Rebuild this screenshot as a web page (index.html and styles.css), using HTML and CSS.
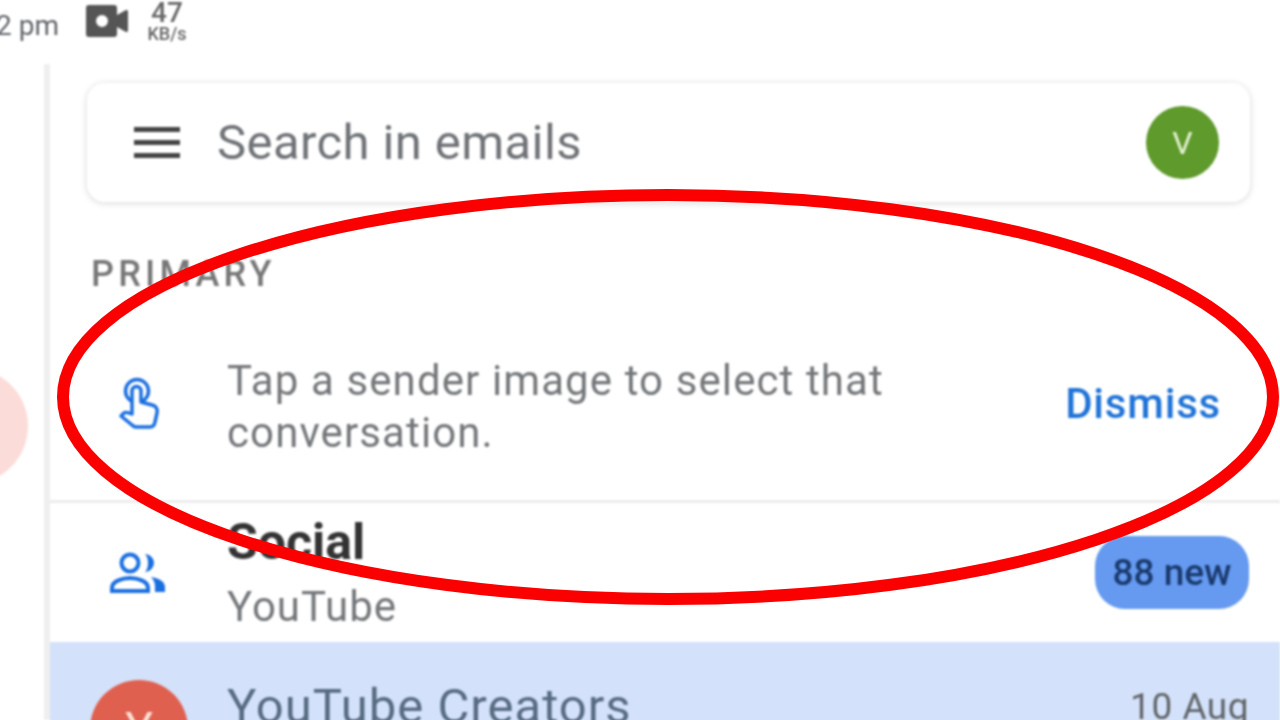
FILE: index.html
```html
<!DOCTYPE html>
<html lang="en">
  <head>
    <meta charset="UTF-8" />
    <meta name="viewport" content="width=device-width, initial-scale=1.0" />
    <title>Gmail tip</title>
    <link rel="stylesheet" href="styles.css">
  </head>
  <body>
    <div class="screen">
      <div class="page">
        <div class="status-bar">
          <span class="clock">2 pm</span>
          <svg class="cam-icon" width="44" height="34" viewBox="0 0 44 34">
            <path fill="#555" fill-rule="evenodd" d="M4 1h25a3 3 0 0 1 3 3v7l9-5a1.500 1.500 0 0 1 2 1.500v19a1.500 1.500 0 0 1-2 1.500l-9-5v7a3 3 0 0 1-3 3H4a3 3 0 0 1-3-3V4a3 3 0 0 1 3-3zM17 11a6 6 0 1 0 0 12 6 6 0 0 0 0-12z"/>
          </svg>
          <div class="speed">
            <span class="speed-num">47</span>
            <span class="speed-unit">KB/s</span>
          </div>
        </div>

        <div class="main">
          <div class="gutter">
            <div class="peek-circle"></div>
          </div>
          <div class="app">
            <div class="search-wrap">
              <div class="search-card">
                <div class="menu-icon"><i></i><i></i><i></i></div>
                <span class="search-text">Search in emails</span>
                <div class="avatar">V</div>
              </div>
            </div>

            <h4 class="section-title">PRIMARY</h4>

            <div class="tip-row">
              <svg class="tap-icon" width="44" height="56" viewBox="0 0 44 56" fill="none" stroke="#1a6fe0" stroke-width="3.500" stroke-linejoin="round" stroke-linecap="round">
                <circle cx="19" cy="14" r="11.500"/>
                <path d="M14 27V14a4.500 4.500 0 0 1 9 0v11l11 3c4 1 6 4 5 8l-2 9c-.5 3-2 5-5 5H18c-2 0-3-1-4-2L3 39l3-3c1-1 3-1 8 1z" fill="#fff"/>
              </svg>
              <p class="tip-text">Tap a sender image to select that conversation.</p>
              <span class="dismiss">Dismiss</span>
            </div>

            <div class="social-row">
              <svg class="people-icon" width="56" height="42" viewBox="0 0 56 42" fill="none" stroke="#1a6fe0" stroke-width="4">
                <circle cx="20" cy="11" r="8.500"/>
                <path d="M2 39v-3c0-7 11-10 18-10s18 3 18 10v3z"/>
                <path d="M35 2a9 9 0 0 1 0 18c2-2 3-5 3-9s-1-7-3-9z" fill="#1a6fe0" stroke="none"/>
                <path d="M41 25c7 1 14 4 14 10v5H45v-5c0-4-1-7-4-10z" fill="#1a6fe0" stroke="none"/>
              </svg>
              <div class="social-body">
                <div class="social-title">Social</div>
                <div class="social-sub">YouTube</div>
              </div>
              <span class="new-badge">88 new</span>
            </div>

            <div class="mail-row">
              <div class="sender-avatar">Y</div>
              <div class="mail-sender">YouTube Creators</div>
              <div class="mail-date">10 Aug</div>
            </div>
          </div>
        </div>
      </div>

      <svg class="red-ring" width="1280" height="720" viewBox="0 0 1280 720" fill="none">
        <ellipse cx="668" cy="397" rx="605" ry="202" stroke="#fa0000" stroke-width="12"/>
      </svg>
    </div>
  </body>
</html>
```

FILE: styles.css
```css
* {
  margin: 0;
  padding: 0;
  box-sizing: border-box;
}
html,
body {
  height: 100%;
  overflow: hidden;
  background: #fff;
}
body {
  font-family: Roboto, "Liberation Sans", sans-serif;
}

.screen {
  position: relative;
  width: 1280px;
  height: 720px;
  overflow: hidden;
}
/* the source is a soft video frame */
.page {
  height: 720px;
  display: flex;
  flex-direction: column;
  filter: blur(0.8px);
}

.status-bar {
  height: 64px;
  flex: none;
  display: flex;
  align-items: flex-start;
  margin-left: -4px;
  color: #5f6368;
}
.clock {
  font-size: 28px;
  line-height: 30px;
  margin-top: 11px;
  width: 89px;
  white-space: nowrap;
}
.cam-icon {
  margin-top: 4px;
}
.speed {
  margin-left: 14px;
  width: 48px;
  display: flex;
  flex-direction: column;
  align-items: center;
  color: #666;
}
.speed-num {
  font-size: 28px;
  line-height: 25px;
  font-weight: 500;
}
.speed-unit {
  font-size: 18px;
  line-height: 17px;
  font-weight: 500;
}

.main {
  flex: 1;
  display: flex;
  min-height: 0;
}
.gutter {
  position: relative;
  width: 44px;
  flex: none;
  background: #fff;
}
.peek-circle {
  position: absolute;
  left: -88px;
  top: 304px;
  width: 116px;
  height: 116px;
  border-radius: 50%;
  background: #fcdcd9;
}

.app {
  flex: 1;
  min-width: 0;
  border-left: 6px solid #efefef;
}

.search-wrap {
  padding: 19px 30px 0 37px;
}
.search-card {
  height: 119px;
  border-radius: 18px;
  background: #fff;
  box-shadow: 0 1px 7px rgba(0, 0, 0, 0.16);
  display: flex;
  align-items: center;
  padding: 0 31px 0 47px;
}
.menu-icon {
  width: 46px;
  display: flex;
  flex-direction: column;
  gap: 8px;
}
.menu-icon i {
  display: block;
  height: 5px;
  background: #444;
}
.search-text {
  margin-left: 37px;
  flex: 1;
  font-size: 49px;
  line-height: 56px;
  letter-spacing: 0.400px;
  color: #6f7276;
}
.avatar {
  width: 73px;
  height: 73px;
  border-radius: 50%;
  background: #5f9a2c;
  color: #e4f3d4;
  font-size: 32px;
  display: flex;
  align-items: center;
  justify-content: center;
}

.section-title {
  margin: 52px 0 0 41px;
  height: 40px;
  font-size: 36px;
  line-height: 40px;
  font-weight: 500;
  letter-spacing: 4.200px;
  color: #777;
}

.tip-row {
  height: 209px;
  display: flex;
  align-items: center;
  padding: 0 59px 0 68px;
  border-bottom: 3px solid #ececec;
}
.tap-icon {
  flex: none;
  margin-top: 16px;
}
.tip-text {
  margin-left: 65px;
  margin-top: 20px;
  width: 720px;
  font-size: 42px;
  line-height: 52px;
  letter-spacing: 1.100px;
  color: #74777a;
}
.dismiss {
  margin-left: auto;
  margin-top: 12px;
  font-size: 42px;
  font-weight: 500;
  letter-spacing: 0.800px;
  color: #1f73d8;
}

.social-row {
  height: 139px;
  display: flex;
  align-items: center;
  padding: 0 31px 0 60px;
}
.people-icon {
  flex: none;
}
.social-body {
  margin-left: 61px;
  margin-top: 2px;
  flex: 1;
}
.social-title {
  font-size: 50px;
  line-height: 58px;
  font-weight: 700;
  color: #333;
}
.social-sub {
  margin-top: 9px;
  font-size: 42px;
  line-height: 54px;
  letter-spacing: 1px;
  color: #74777a;
}
.new-badge {
  width: 154px;
  height: 73px;
  border-radius: 30px;
  background: #659af0;
  color: #1a3a6e;
  font-size: 37px;
  font-weight: 500;
  display: flex;
  align-items: center;
  justify-content: center;
}

.mail-row {
  height: 100px;
  background: #d3e2fa;
  display: flex;
  align-items: flex-start;
  padding: 40px 31px 0 40px;
}
.sender-avatar {
  width: 98px;
  height: 98px;
  margin-top: -2px;
  border-radius: 50%;
  background: #e0604f;
  color: #fde3d8;
  font-size: 46px;
  display: flex;
  align-items: center;
  justify-content: center;
  flex: none;
}
.mail-sender {
  margin-left: 39px;
  flex: 1;
  font-size: 49px;
  line-height: 50px;
  letter-spacing: 1px;
  color: #566a80;
}
.mail-date {
  font-size: 37px;
  line-height: 50px;
  letter-spacing: 0.500px;
  color: #606468;
}

.red-ring {
  position: absolute;
  left: 0;
  top: 0;
}
```
